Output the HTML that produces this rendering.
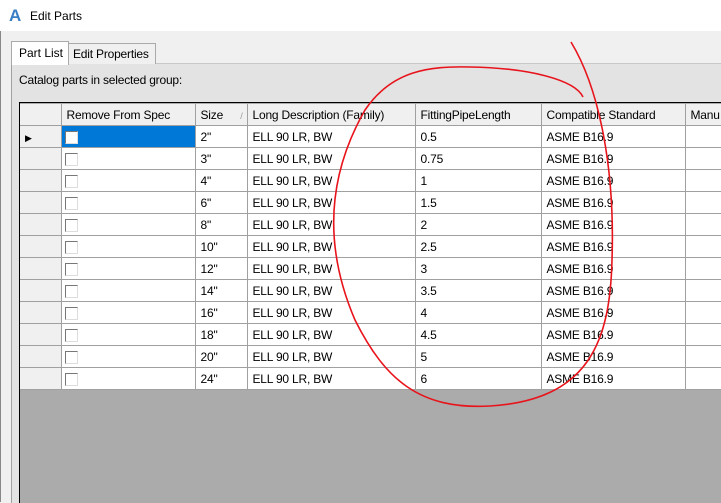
<!DOCTYPE html><html><head><style>
body{margin:0;width:721px;height:502px;overflow:hidden;background:#f0f0f0;font-family:"Liberation Sans",sans-serif;font-size:12px;color:#000;position:relative}
.a{position:absolute}
table{border-collapse:collapse;table-layout:fixed}
td{height:21px;border-right:1px solid #a0a0a0;border-bottom:1px solid #a0a0a0;padding:0 0 0 5px;background:#fff;white-space:nowrap;overflow:hidden;letter-spacing:-0.2px}
tr.h td{height:21px;background:#f0f0f0}
td.rh{background:#f0f0f0}
.cb{display:inline-block;width:11px;height:11px;border:1px solid #777;border-right-color:#ddd;border-bottom-color:#ddd;background:#fff;vertical-align:middle;margin-left:-2px}
</style></head><body>
<div class="a" style="left:0;top:0;width:721px;height:31px;background:#fff"></div>
<div class="a" style="left:9px;top:6px;font-weight:bold;font-size:17px;color:#3a7ec4">A</div>
<div class="a" style="left:30px;top:9px;font-size:12px">Edit Parts</div>
<div class="a" style="left:0;top:31px;width:1px;height:471px;background:#888"></div>
<div class="a" style="left:11px;top:63px;width:710px;height:439px;background:#e3e3e3;border-left:1px solid #a0a0a0;border-top:1px solid #c8c8c8"></div>
<div class="a" style="left:11px;top:41px;width:56px;height:23px;background:#fff;border:1px solid #aaa;border-bottom:none"></div>
<div class="a" style="left:19px;top:46px">Part List</div>
<div class="a" style="left:68px;top:43px;width:86px;height:20px;background:#f0f0f0;border:1px solid #aaa;border-bottom:none"></div>
<div class="a" style="left:73px;top:47px;letter-spacing:-0.2px">Edit Properties</div>
<div class="a" style="left:19px;top:73px;letter-spacing:-0.2px">Catalog parts in selected group:</div>
<div class="a" style="left:19px;top:102px;width:702px;height:400px;background:#ababab;border-left:1px solid #000;border-top:1px solid #000"></div>
<table class="a" style="left:20px;top:104px;width:741px">
<colgroup><col style="width:41px"><col style="width:134px"><col style="width:52px"><col style="width:168px"><col style="width:126px"><col style="width:144px"><col style="width:76px"></colgroup>
<tr class="h"><td></td><td>Remove From Spec</td><td>Size <span style="color:#999;font-size:9px;margin-left:14px">/</span></td><td>Long Description (Family)</td><td>FittingPipeLength</td><td>Compatible Standard</td><td style="border-right:none">Manu</td></tr>
<tr><td class="rh" style="padding-left:5px"><span style="font-size:9px">&#9654;</span></td><td style="background:#0078d7"><span class="cb"></span></td><td>2"</td><td>ELL 90 LR, BW</td><td>0.5</td><td>ASME B16.9</td><td style="border-right:none"></td></tr>
<tr><td class="rh"></td><td><span class="cb"></span></td><td>3"</td><td>ELL 90 LR, BW</td><td>0.75</td><td>ASME B16.9</td><td style="border-right:none"></td></tr>
<tr><td class="rh"></td><td><span class="cb"></span></td><td>4"</td><td>ELL 90 LR, BW</td><td>1</td><td>ASME B16.9</td><td style="border-right:none"></td></tr>
<tr><td class="rh"></td><td><span class="cb"></span></td><td>6"</td><td>ELL 90 LR, BW</td><td>1.5</td><td>ASME B16.9</td><td style="border-right:none"></td></tr>
<tr><td class="rh"></td><td><span class="cb"></span></td><td>8"</td><td>ELL 90 LR, BW</td><td>2</td><td>ASME B16.9</td><td style="border-right:none"></td></tr>
<tr><td class="rh"></td><td><span class="cb"></span></td><td>10"</td><td>ELL 90 LR, BW</td><td>2.5</td><td>ASME B16.9</td><td style="border-right:none"></td></tr>
<tr><td class="rh"></td><td><span class="cb"></span></td><td>12"</td><td>ELL 90 LR, BW</td><td>3</td><td>ASME B16.9</td><td style="border-right:none"></td></tr>
<tr><td class="rh"></td><td><span class="cb"></span></td><td>14"</td><td>ELL 90 LR, BW</td><td>3.5</td><td>ASME B16.9</td><td style="border-right:none"></td></tr>
<tr><td class="rh"></td><td><span class="cb"></span></td><td>16"</td><td>ELL 90 LR, BW</td><td>4</td><td>ASME B16.9</td><td style="border-right:none"></td></tr>
<tr><td class="rh"></td><td><span class="cb"></span></td><td>18"</td><td>ELL 90 LR, BW</td><td>4.5</td><td>ASME B16.9</td><td style="border-right:none"></td></tr>
<tr><td class="rh"></td><td><span class="cb"></span></td><td>20"</td><td>ELL 90 LR, BW</td><td>5</td><td>ASME B16.9</td><td style="border-right:none"></td></tr>
<tr><td class="rh"></td><td><span class="cb"></span></td><td>24"</td><td>ELL 90 LR, BW</td><td>6</td><td>ASME B16.9</td><td style="border-right:none"></td></tr>
</table>
<svg class="a" style="left:0;top:0" width="721" height="502"><path d="M571 42 C600 90 615 170 612 260 C610 340 590 400 490 406 C420 410 385 380 355 320 C325 250 325 180 365 110 C392 70 430 66 470 67 C530 68 575 80 583 97" fill="none" stroke="#e8141c" stroke-width="1.6"/></svg>
</body></html>
